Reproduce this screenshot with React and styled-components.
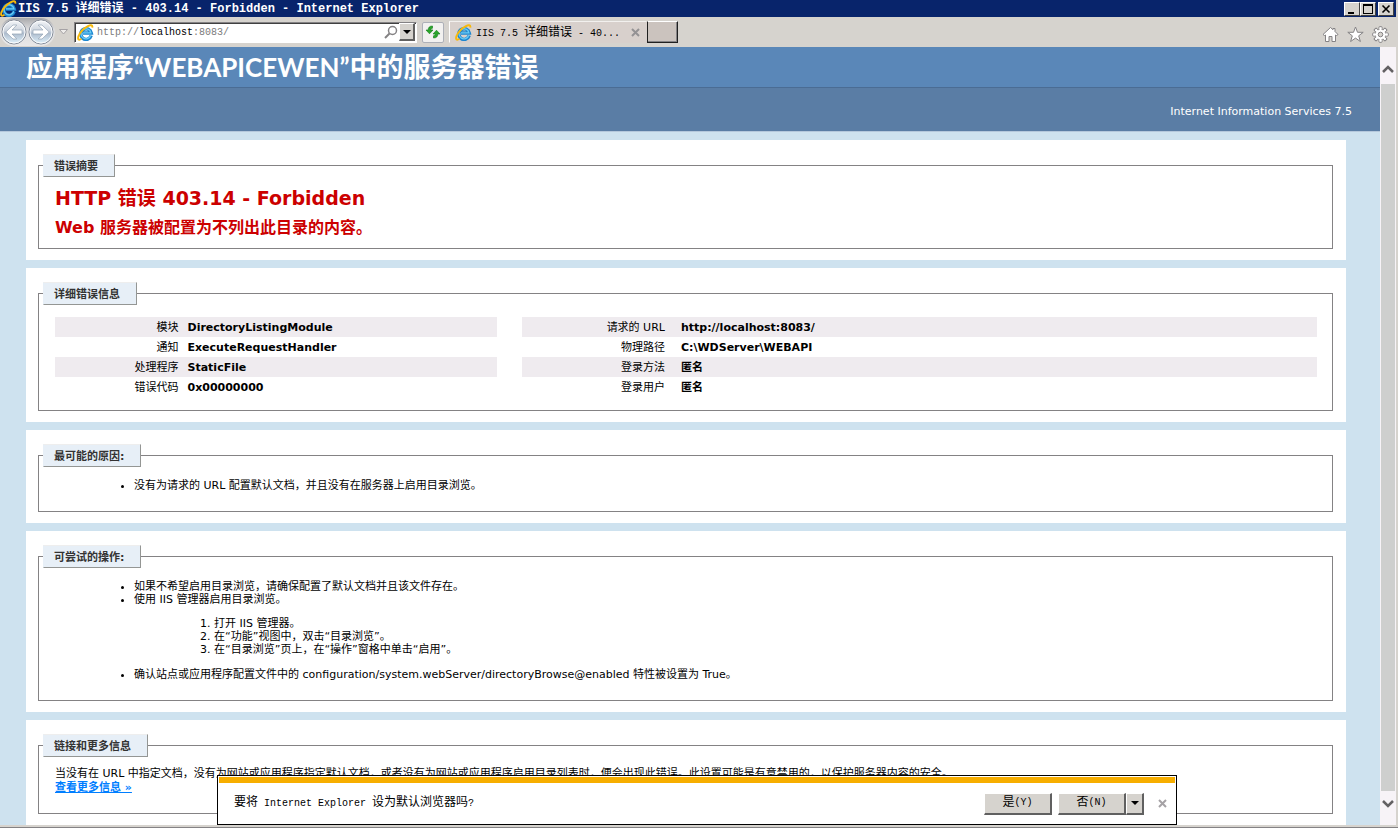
import React from "react";
import styled, { createGlobalStyle } from "styled-components";

const sans = `"DejaVu Sans", "Noto Sans CJK SC", sans-serif`;
const mono = `"Liberation Mono", "Noto Sans CJK SC", monospace`;

const Global = createGlobalStyle`
  * { box-sizing: border-box; }
  body { margin: 0; font: 11px/13px ${sans}; color: #000; }
  button, input { font: inherit; color: inherit; margin: 0; }
  svg { display: block; flex: none; }
`;

const Window = styled.div`
  display: flex;
  flex-direction: column;
  min-height: 100vh;
  background: #d6d3ce;
  border-bottom: 1px solid #848284;
  overflow: hidden;
`;

const TitleBar = styled.header`
  display: flex;
  align-items: center;
  height: 17px;
  margin-right: 2px;
  padding-right: 2px;
  background: #08246b;
  color: #fff;
  font: bold 12px/16px ${mono};
  white-space: pre;
`;
const TitleText = styled.span`
  flex: 1;
  margin-left: 1px;
`;
const Caption = styled.div`
  display: flex;
`;
const CaptionButton = styled.button`
  display: grid;
  place-items: center;
  width: 16px;
  height: 14px;
  margin-left: ${(p) => (p.$apart ? 2 : 0)}px;
  padding: 0;
  background: #d6d3ce;
  border: 1px solid;
  border-color: #fff #404040 #404040 #fff;
`;

const ToolBar = styled.nav`
  display: flex;
  align-items: center;
  height: 30px;
  padding: 0 6px 0 0;
  font: 12px/16px ${mono};
`;
const History = styled.div`
  display: flex;
  align-items: center;
  width: 55px;
  height: 28px;
  background: linear-gradient(#a9a9ab, #dcdcde 40%, #e9e8e8);
  border-radius: 14px;
`;
const NavButton = styled.button`
  display: grid;
  place-items: center;
  width: ${(p) => p.$w || 24}px;
  height: 26px;
  padding: 0;
  background: none;
  border: 0;
`;
const Address = styled.div`
  display: flex;
  align-items: center;
  width: 343px;
  height: 21px;
  margin-left: 3px;
  padding: 0 1px 0 2px;
  background: #fff;
  border: 1px solid;
  border-color: #848284 #fff #fff #848284;
  box-shadow: inset 1px 1px 0 #404040;
`;
const UrlText = styled.span`
  flex: 1;
  margin-left: 3px;
  padding-top: 2px;
  font-size: 10px;
  color: #7b7b7b;
`;
const Host = styled.span`
  color: #000;
`;
const Raised = styled.button`
  display: flex;
  align-items: center;
  justify-content: center;
  width: ${(p) => p.$w}px;
  height: ${(p) => p.$h}px;
  padding: 0;
  background: #d6d3ce;
  border: solid;
  border-width: 1px 2px 2px 1px;
  border-color: #fff #606060 #606060 #fff;
  font: 12px/16px ${mono};
`;
const Refresh = styled.button`
  display: grid;
  place-items: center;
  width: 22px;
  height: 21px;
  margin: 0 5px;
  padding: 0;
  background: #f2f1f0;
  border: 1px solid #adb0b8;
  border-radius: 2px;
`;
const Tab = styled.div`
  display: flex;
  align-items: center;
  width: 198px;
  height: 22px;
  padding: 0 6px 0 5px;
  background: #d8d0cc;
  border: 1px solid;
  border-color: #f2f0ee transparent transparent #fff;
`;
const TabText = styled.span`
  flex: 1;
  margin-left: 4px;
  padding-top: 2px;
  white-space: pre;
`;
const Latin = styled.span`
  font-size: 10px;
`;
const NewTab = styled.button`
  width: 31px;
  height: 22px;
  background: #cbc3be;
  border: 1px solid;
  border-color: #fff #202020 #202020 #202020;
  box-shadow: inset -1px -1px 0 #848284;
`;
const Tools = styled.div`
  display: flex;
  gap: 1px;
  margin-left: auto;
  padding-top: 4px;
`;

const View = styled.div`
  position: relative;
  display: flex;
  flex: 1;
  margin: 0 2px 2px 0;
`;
const Page = styled.main`
  flex: 1;
  min-width: 0;
  background: #cee2ef;
`;
const Scroll = styled.div`
  display: flex;
  flex-direction: column;
  width: 16px;
  padding: 0 1px;
  background: #f7f3f7;
`;
const ScrollButton = styled.button`
  display: grid;
  place-items: center;
  height: ${(p) => p.$h}px;
  padding: ${(p) => p.$pad};
  background: none;
  border: 0;
`;
const Thumb = styled.div`
  flex: 1;
  background: #cecfce;
`;

const Banner = styled.div`
  height: 41px;
  padding: 2px 26px 0;
  background: #5a87b8;
  border-bottom: 1px solid #4a6c94;
`;
const H1 = styled.h1`
  margin: 0;
  font: bold 27px/36px Lato, "Noto Sans CJK SC", sans-serif;
  color: #fff;
  white-space: nowrap;
`;
const AppName = styled.span`
  font-size: 26px;
`;
const Server = styled.div`
  height: 43px;
  padding: 17px 28px 0;
  background: #5a7da5;
  color: #fff;
  text-align: right;
`;
const Cards = styled.div`
  display: flex;
  flex-direction: column;
  gap: 8px;
  padding: 8px 34px 0 26px;
  border-top: 1px solid #b5c8dc;
`;
const Card = styled.section`
  padding: 14px 13px 11px 12px;
  background: #fff;
`;
const Fieldset = styled.fieldset`
  min-width: 0;
  margin: 0;
  padding: ${(p) => p.$pad || "12px 15px 19px 16px"};
  border: 1px solid #848284;
`;
const Legend = styled.legend`
  margin-left: -12px;
  padding: 5px 16px 3px 10px;
  background: #e7eff7;
  border: 1px solid;
  border-color: #eeeeee #949694 #949694 #e7eff7;
  color: #333;
  font-weight: bold;
`;
const H2 = styled.h2`
  margin: 0 0 9px;
  font-size: 19px;
  line-height: 22px;
  color: #c00;
`;
const H3 = styled.h3`
  margin: 0;
  font-size: 16px;
  line-height: 20px;
  color: #c00;
`;
const Details = styled.div`
  display: flex;
  justify-content: space-between;
  align-items: flex-start;
`;
const Table = styled.table`
  width: ${(p) => p.$w}%;
  border-collapse: collapse;
  table-layout: fixed;
  tr:nth-child(odd) { background: #efebef; }
  th, td { height: 20px; padding: 0; text-align: left; font-weight: bold; }
  th { width: ${(p) => p.$label}%; padding-right: ${(p) => p.$gap}px; text-align: right; font-weight: normal; }
`;
const Ul = styled.ul`
  margin: 0;
  padding: 0 0 0 79px;
`;
const Ol = styled.ol`
  margin: 11px 0 12px;
  padding: 0 0 0 80px;
`;
const P = styled.p`
  margin: 0;
  line-height: 14px;
`;
const More = styled.a`
  color: #007eff;
  font-weight: bold;
`;

const Prompt = styled.aside`
  position: absolute;
  left: 0;
  right: 2px;
  bottom: 0;
  width: 960px;
  max-width: 90%;
  height: 50px;
  margin: 0 auto;
  padding: 1px;
  background: #fff;
  border: 1px solid #000;
  font: 12px/16px ${mono};
`;
const Stripe = styled.div`
  height: 6px;
  background: #f7ae00;
`;
const PromptRow = styled.div`
  display: flex;
  align-items: center;
  height: 41px;
  padding: 0 3px 0 15px;
`;
const PromptText = styled.span`
  flex: 1;
`;
const ButtonPair = styled.div`
  display: flex;
  margin: 0 8px 0 6px;
`;

const IE = () => (
  <svg width="17" height="17" viewBox="0 0 17 17" fill="none">
    <path d="M14.200 11.500A5.300 5.300 0 1 1 14.300 9H6" stroke="#1c86cf" strokeWidth="3.400" />
    <path d="M13.800 11.200A5 5 0 1 1 13.900 8.800H6" stroke="#6accf5" strokeWidth="1.300" />
    <path d="M4.500 14.800C1.500 16.800.3 15 1.600 12 3 8.500 6.500 4.500 10.500 2.300c3-1.600 5.300-1.600 4.800 1.400" stroke="#f7b90a" strokeWidth="1.900" />
  </svg>
);
const Arrow = ({ flip }) => (
  <svg width="26" height="26" viewBox="0 0 26 26" transform={flip ? "scale(-1 1)" : undefined}>
    <defs>
      <linearGradient id="orb" x1="0" y1="0" x2="0" y2="1">
        <stop offset="0" stopColor="#f4f6f9" />
        <stop offset=".45" stopColor="#cdd4de" />
        <stop offset=".55" stopColor="#aebccd" />
        <stop offset="1" stopColor="#dff2fc" />
      </linearGradient>
    </defs>
    <circle cx="13" cy="13" r="12" fill="url(#orb)" stroke="#868d99" />
    <circle cx="13" cy="13" r="11" fill="none" stroke="#fbfcfd" />
    <path d="M4.800 13l7.200-7h3.800l-4.800 5h10v4H11l4.800 5H12z" fill="#fff" stroke="#94a3b5" strokeWidth=".7" />
  </svg>
);
const Down = () => (
  <svg width="8" height="4" viewBox="0 0 8 4"><path d="M0 0h8L4 4z" /></svg>
);
const Cross = ({ size = 9, color = "#949294" }) => (
  <svg width={size} height={size} viewBox="0 0 9 9"><path d="M1 1l7 7M8 1L1 8" stroke={color} strokeWidth="2" /></svg>
);
const gear = Array.from({ length: 8 }, (_, i) => i * 45);

function Section({ title, pad, children }) {
  return (
    <Card>
      <Fieldset $pad={pad}>
        <Legend>{title}</Legend>
        {children}
      </Fieldset>
    </Card>
  );
}
function Facts({ rows, ...rest }) {
  return (
    <Table {...rest}>
      <tbody>
        {rows.map(([k, v]) => (
          <tr key={k}><th scope="row">{k}</th><td>{v}</td></tr>
        ))}
      </tbody>
    </Table>
  );
}

export default function App() {
  return (
    <Window>
      <Global />
      <TitleBar>
        <IE />
        <TitleText>IIS 7.5 详细错误 - 403.14 - Forbidden - Internet Explorer</TitleText>
        <Caption>
          <CaptionButton aria-label="最小化"><svg width="12" height="10"><path d="M2 8h6v2H2z" /></svg></CaptionButton>
          <CaptionButton aria-label="最大化"><svg width="12" height="10"><path d="M1 0h10v10H1zM2 2v7h8V2z" fillRule="evenodd" /></svg></CaptionButton>
          <CaptionButton aria-label="关闭" $apart><svg width="12" height="10"><path d="M2.500 1.500l7 7M9.500 1.500l-7 7" stroke="#000" strokeWidth="1.600" /></svg></CaptionButton>
        </Caption>
      </TitleBar>

      <ToolBar>
        <History>
          <NavButton aria-label="后退" $w={27}><Arrow /></NavButton>
          <NavButton aria-label="前进" $w={28}><Arrow flip /></NavButton>
        </History>
        <NavButton aria-label="历史记录" $w={16}>
          <svg width="9" height="6" viewBox="0 0 9 6"><path d="M.5.5h8l-4 4.500z" fill="#eeecea" stroke="#a5a2a5" /></svg>
        </NavButton>
        <Address>
          <IE />
          <UrlText>http://<Host>localhost</Host>:8083/</UrlText>
          <NavButton aria-label="搜索" $w={16}>
            <svg width="14" height="14" viewBox="0 0 14 14" fill="none" stroke="#848284"><circle cx="8.500" cy="5.500" r="4" strokeWidth="1.500" /><path d="M5.500 8.500L1 13" strokeWidth="2" /></svg>
          </NavButton>
          <Raised aria-label="显示地址" $w={16} $h={18}><Down /></Raised>
        </Address>
        <Refresh aria-label="刷新">
          <svg width="16" height="14" viewBox="0 0 16 14" fill="#2aa52a" stroke="#0f7a18" strokeWidth=".6">
            <path d="M7.500 1C4.500 1 3.200 2.500 3.200 5H1l3.500 3.800L8 5H5.800c0-1 .5-1.600 1.700-1.800z" />
            <path d="M8.500 13c3 0 4.300-1.500 4.300-4H15l-3.500-3.800L8 9h2.200c0 1-.5 1.600-1.700 1.800z" />
          </svg>
        </Refresh>
        <Tab>
          <IE />
          <TabText><Latin>IIS 7.5 </Latin>详细错误<Latin> - 40...</Latin></TabText>
          <Cross />
        </Tab>
        <NewTab aria-label="新建选项卡" />
        <Tools>
          <NavButton aria-label="主页">
            <svg width="17" height="17" viewBox="0 0 17 17" fill="#fff" stroke="#848284"><path d="M8.500 1.500L1 8.500l1.500 1L3.500 9v6.500h3.500v-5h3v5h3.500V9l1 .5 1.500-1-3-3v-3h-2v1.200z" /></svg>
          </NavButton>
          <NavButton aria-label="收藏夹">
            <svg width="17" height="17" viewBox="0 0 17 17" fill="#fff" stroke="#848284"><path d="M8.500 1l2 5.300h5.700l-4.500 3.500 1.700 5.700-4.900-3.400-4.900 3.400 1.700-5.700L.8 6.300h5.700z" /></svg>
          </NavButton>
          <NavButton aria-label="工具">
            <svg width="17" height="17" viewBox="-8.500 -8.500 17 17">
              {gear.map((a) => <rect key={a} x="-1.500" y="-7.800" width="3" height="4" rx=".5" transform={`rotate(${a})`} fill="#fff" stroke="#848284" />)}
              <circle r="5.200" fill="#fff" stroke="#848284" strokeWidth=".7" />
              {gear.map((a) => <rect key={a} x="-1" y="-6.800" width="2" height="4" transform={`rotate(${a})`} fill="#fff" />)}
              <circle r="2.300" fill="#d6d3ce" stroke="#848284" />
            </svg>
          </NavButton>
        </Tools>
      </ToolBar>

      <View>
        <Page>
          <Banner><H1>应用程序<AppName>“WEBAPICEWEN”</AppName>中的服务器错误</H1></Banner>
          <Server>Internet Information Services 7.5</Server>
          <Cards>
            <Section title="错误摘要" pad="10px 15px 10px 16px">
              <H2>HTTP 错误 403.14 - Forbidden</H2>
              <H3>Web 服务器被配置为不列出此目录的内容。</H3>
            </Section>
            <Section title="详细错误信息" pad="12px 15px 13px 16px">
              <Details>
                <Facts $w={35} $label={30} $gap={9} rows={[["模块", "DirectoryListingModule"], ["通知", "ExecuteRequestHandler"], ["处理程序", "StaticFile"], ["错误代码", "0x00000000"]]} />
                <Facts $w={63} $label={20} $gap={16} rows={[["请求的 URL", "http://localhost:8083/"], ["物理路径", "C:\\WDServer\\WEBAPI"], ["登录方法", "匿名"], ["登录用户", "匿名"]]} />
              </Details>
            </Section>
            <Section title="最可能的原因:">
              <Ul><li>没有为请求的 URL 配置默认文档，并且没有在服务器上启用目录浏览。</li></Ul>
            </Section>
            <Section title="可尝试的操作:">
              <Ul>
                <li>如果不希望启用目录浏览，请确保配置了默认文档并且该文件存在。</li>
                <li>使用 IIS 管理器启用目录浏览。
                  <Ol>
                    <li>打开 IIS 管理器。</li>
                    <li>在“功能”视图中，双击“目录浏览”。</li>
                    <li>在“目录浏览”页上，在“操作”窗格中单击“启用”。</li>
                  </Ol>
                </li>
                <li>确认站点或应用程序配置文件中的 configuration/system.webServer/directoryBrowse@enabled 特性被设置为 True。</li>
              </Ul>
            </Section>
            <Section title="链接和更多信息" pad="10px 15px 18px 16px">
              <P>当没有在 URL 中指定文档，没有为网站或应用程序指定默认文档，或者没有为网站或应用程序启用目录列表时，便会出现此错误。此设置可能是有意禁用的，以保护服务器内容的安全。</P>
              <P><More href="#more">查看更多信息 »</More></P>
            </Section>
          </Cards>
        </Page>
        <Scroll>
          <ScrollButton aria-label="向上滚动" $h={37} $pad="6px 0 0">
            <svg width="12" height="8" viewBox="0 0 12 8"><path d="M1 7l5-5 5 5" fill="none" stroke="#636163" strokeWidth="2.500" /></svg>
          </ScrollButton>
          <Thumb />
          <ScrollButton aria-label="向下滚动" $h={34} $pad="0 0 8px">
            <svg width="12" height="8" viewBox="0 0 12 8"><path d="M1 1l5 5 5-5" fill="none" stroke="#636163" strokeWidth="2.500" /></svg>
          </ScrollButton>
        </Scroll>
        <Prompt>
          <Stripe />
          <PromptRow>
            <PromptText>要将<Latin> Internet Explorer </Latin>设为默认浏览器吗<Latin>?</Latin></PromptText>
            <Raised $w={68} $h={22}>是<Latin>(Y)</Latin></Raised>
            <ButtonPair>
              <Raised $w={68} $h={22}>否<Latin>(N)</Latin></Raised>
              <Raised $w={18} $h={22} aria-label="更多选项"><Down /></Raised>
            </ButtonPair>
            <NavButton aria-label="关闭提示" $w={20}><Cross color="#a5a2a5" /></NavButton>
          </PromptRow>
        </Prompt>
      </View>
    </Window>
  );
}
